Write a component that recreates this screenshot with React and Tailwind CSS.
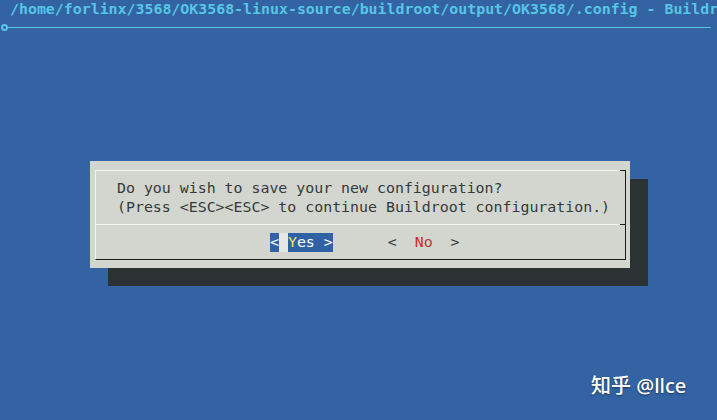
import React from 'react';

// menuconfig "save configuration?" dialog
const TITLE =
  '/home/forlinx/3568/OK3568-linux-source/buildroot/output/OK3568/.config - Buildroot 2018.02-rc3 Configuration';

function App() {
  return (
    <div className="relative w-[717px] h-[420px] overflow-hidden bg-[#3363a2] font-['DejaVu_Sans_Mono',monospace] text-[14.9px]">
      {/* --- BACKTITLE --- */}
      <div className="h-[19px] pl-[10px] leading-[19px] font-bold text-[#56c6e6] whitespace-nowrap overflow-hidden">{TITLE}</div>

      {/* --- TOP RULE --- */}
      <div className="flex items-center h-[16px] pl-[1px] pr-[6px]">
        <div className="w-[7px] h-[7px] rounded-full border-2 border-[#56c6e6]"></div>
        <div className="flex-1 h-px bg-[#56c6e6]"></div>
      </div>

      {/* --- DIALOG --- */}
      <div className="ml-[90px] mt-[126px] w-[540px] h-[107px] bg-[#d3d6ce] shadow-[18px_18px_0_0_#2c3133] pt-[9px] pl-[5px] pr-[4px]">
        <div className="border-l border-r border-b border-l-[#f4f4f0] border-r-[#1c1c1c] border-b-[#1c1c1c]">
          <div className="flex h-px">
            <div className="flex-1 bg-[#f4f4f0]"></div>
            <div className="w-[5px] bg-[#1c1c1c]"></div>
          </div>

          <div className="pl-[21px] pt-[8px] pb-[7px] leading-[19px] text-[#353a3c] whitespace-pre">
            <div>Do you wish to save your new configuration?</div>
            <div>(Press &lt;ESC&gt;&lt;ESC&gt; to continue Buildroot configuration.)</div>
          </div>

          <div className="flex h-px">
            <div className="flex-1 bg-[#f4f4f0]"></div>
            <div className="w-[5px] bg-[#1c1c1c]"></div>
          </div>

          {/* buttons */}
          <div className="flex pl-[174px] pt-[8px] pb-[7px] leading-[19px] whitespace-pre">
            <div className="flex bg-[#2f62a4] text-white">
              <span>&lt;</span>
              <span className="bg-[#e6e6e2]"> </span>
              <span className="text-[#f5e84a]">Y</span>
              <span>es &gt;</span>
            </div>
            <div className="flex ml-[55px] text-[#353a3c]">
              <span>&lt;  </span>
              <span className="text-[#cc2a2a]">N</span>
              <span className="text-[#a84040]">o</span>
              <span>  &gt;</span>
            </div>
          </div>
        </div>
      </div>

      {/* --- WATERMARK --- */}
      <div className="absolute left-[591px] top-[372px] text-[20px] leading-[28px] font-medium text-white font-['Noto_Sans','Noto_Sans_CJK_SC',sans-serif] [text-shadow:0_1px_2px_rgba(0,0,0,0.45)] whitespace-nowrap">
        知乎 @llce
      </div>
    </div>
  );
}

export default App;
